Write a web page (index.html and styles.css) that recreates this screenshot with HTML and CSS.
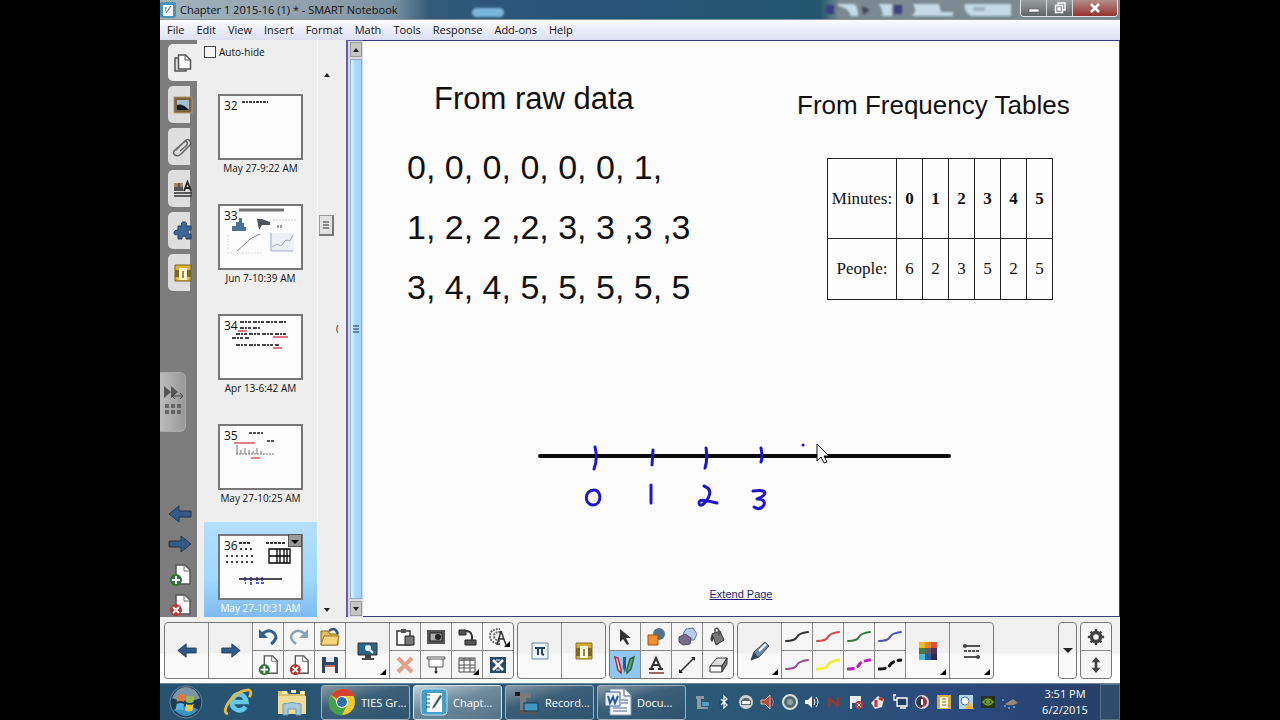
FILE: index.html
```html
<!DOCTYPE html>
<html lang="en">
<head>
  <meta charset="UTF-8">
  <title>Chapter 1 2015-16 (1) * - SMART Notebook</title>
  <link rel="stylesheet" href="styles.css">
</head>
<body>
<div class="screen">

  <!-- Title bar -->
  <header class="titlebar">
    <svg class="app-icon" viewBox="0 0 16 16" width="16" height="16"><rect width="16" height="16" rx="2" fill="#4a93b8"/><rect x="3" y="3" width="10" height="11" fill="#fff"/><path d="M6 11l5-7M5 6h2M5 8h1" stroke="#357" fill="none"/></svg>
    <span class="title">Chapter 1 2015-16 (1) * - SMART Notebook</span>
    <span class="cloud"></span>
    <svg class="backdrop" viewBox="0 0 200 19" width="200" height="19"><g fill="#c3dae6"><path d="M18 4h15q5 0 5 12h-7q-3-9-13-10z"/><path d="M58 4h14v12H62q2-6-4-12zM93 4h26l2 8h12v4H92q6-5 1-12z"/><path d="M145 4h46v12h-40q-8-5-6-12z"/></g><path d="M6 5h8v9H6zM74 5h8v9h-8z" fill="#3a3f7e"/><path d="M42 6l8 4-7 5z" fill="#3d4650"/><path d="M154 8h10v2h-10z" stroke="#7a8c98" fill="none"/></svg>
    <div class="window-buttons">
      <button aria-label="Minimize"><svg viewBox="0 0 12 12" width="12" height="12"><path d="M1 7h10v3H1z" fill="#fff" stroke="#444" stroke-width=".5"/></svg></button>
      <button aria-label="Restore"><svg viewBox="0 0 12 12" width="12" height="12"><path d="M4 3V1h7v7H9M1.500 3.500h7v7h-7zM4 6h2v2H4z" fill="none" stroke="#fff" stroke-width="1.500"/></svg></button>
      <button class="close" aria-label="Close"><svg viewBox="0 0 12 12" width="12" height="12"><path d="M2 2l8 8M10 2l-8 8" stroke="#fff" stroke-width="2.500"/></svg></button>
    </div>
  </header>

  <nav class="menubar">
    <a href="#">File</a><a href="#">Edit</a><a href="#">View</a><a href="#">Insert</a><a href="#">Format</a><a href="#">Math</a><a href="#">Tools</a><a href="#">Response</a><a href="#">Add-ons</a><a href="#">Help</a>
  </nav>

  <main class="workspace">
    <!-- Side tabs -->
    <aside class="rail">
      <div class="tabs">
        <button class="active" aria-label="Page Sorter"><svg viewBox="0 0 20 20" width="20" height="20"><path d="M5 5H2v13h11v-3" fill="#ddd" stroke="#555" stroke-width="1.500"/><path d="M5.500 2h7l5 5v9h-12z" fill="#fff" stroke="#555" stroke-width="1.500"/><path d="M12 2v5h5" fill="none" stroke="#555"/></svg></button>
        <button aria-label="Gallery"><svg viewBox="0 0 20 20" width="20" height="20"><path d="M1 2h18v16H1z" fill="#7a6342" stroke="#b59a6d"/><path d="M4 5h12v10H4z" fill="#a3bed0"/><path d="M4 10q5-2 12 5H4z" fill="#111c28"/></svg></button>
        <button aria-label="Attachments"><svg viewBox="0 0 20 20" width="20" height="20"><path d="M3 13L12 4q3-3 5 0t-1 5l-8 8q-3 3-6 1t0-5l8-7q3-3 4-1t-1 4l-6 5" fill="none" stroke="#666" stroke-width="1.600"/></svg></button>
        <button aria-label="Properties"><svg viewBox="0 0 20 20" width="20" height="20"><path d="M1 4h9v8H1z" fill="#a48568"/><path d="M1 8h9v4H1zM5 4h2v8H5z" fill="#555"/><path d="M11 12l3.500-9 3.500 9M12 9h5" stroke="#222" stroke-width="1.800" fill="none"/><path d="M1 14h18M1 17h18" stroke="#333" stroke-width="1.500"/></svg></button>
        <button aria-label="Add-ons"><svg viewBox="0 0 20 20" width="20" height="20"><path d="M5 5h4q-2-4 2-4t2 4h5v4q-3-1-3 2t3 2v5h-5q1-3-2-3t-2 3H5v-5q-4 2-4-1t4-3z" fill="#3d6796" stroke="#1f3d63"/></svg></button>
        <button aria-label="Activity"><svg viewBox="0 0 20 20" width="20" height="20"><path d="M2 2h16v16H2z" fill="#e1b33b" stroke="#7c601a"/><path d="M2 7h16v7H2z" fill="#806819"/><path d="M6 5h8v12H6z" fill="#fff8de"/><path d="M9 8h2v7H9z" fill="#a98a35"/></svg></button>
      </div>
      <button class="handle" aria-label="Move toolbar"><svg viewBox="0 0 24 46" width="24" height="46"><path d="M4 4v12l7-6zM11 4v12l7-6z" fill="#555"/><path d="M12 14h11M15 11l-3 3 3 3M20 11l3 3-3 3" stroke="#444" fill="none"/><path d="M5 22h4v4H5zM11 22h4v4h-4zM17 22h4v4h-4zM5 28h4v4H5zM11 28h4v4h-4zM17 28h4v4h-4z" fill="#666"/></svg></button>
      <div class="page-buttons">
        <button aria-label="Previous page"><svg viewBox="0 0 24 20" width="24" height="20"><use href="#arrow-left"/></svg></button>
        <button aria-label="Next page"><svg viewBox="0 0 24 20" width="24" height="20"><use href="#arrow-right"/></svg></button>
        <button aria-label="Add page"><svg viewBox="0 0 24 24" width="24" height="24"><use href="#page-add"/></svg></button>
        <button aria-label="Delete page"><svg viewBox="0 0 24 24" width="24" height="24"><use href="#page-delete"/></svg></button>
      </div>
    </aside>

    <!-- Page sorter -->
    <section class="sorter">
      <div class="pages">
        <label class="autohide"><input type="checkbox">Auto-hide</label>
        <figure class="page">
          <div class="thumb"><span class="num">32</span><svg viewBox="0 0 81 62"><path d="M22 6h26" stroke="#444" stroke-width="2" stroke-dasharray="3 1 2 1"/></svg></div>
          <figcaption>May 27-9:22 AM</figcaption>
        </figure>
        <figure class="page">
          <div class="thumb"><span class="num">33</span><svg viewBox="0 0 81 62"><path d="M19 4h45" stroke="#707070" stroke-width="3"/><path d="M12 25h14v-4h-2v-4h-2v-5h-3v4h-3v4h-4z" fill="#4d6f9c"/><path d="M37 13h5l8 3v3h-8l-3 5z" fill="#50545a"/><path d="M53 14h23" stroke="#ccc" stroke-dasharray="2 1"/><path d="M58 22v-3M61 22v-3" stroke="#444"/><path d="M7 47h35M8 29v15" stroke="#ddd" stroke-dasharray="2 1"/><path d="M17 45l9-8 4-4 10-5" stroke="#888" fill="none"/><path d="M50 27h24v18H50z" fill="#edf0f5"/><path d="M51 27v18h22M52 41l5-3 4 2 5-6 4 1 3-6" stroke="#8b9bb5" fill="none" stroke-width=".8"/></svg></div>
          <figcaption>Jun 7-10:39 AM</figcaption>
        </figure>
        <figure class="page">
          <div class="thumb"><span class="num">34</span><svg viewBox="0 0 81 62"><g stroke="#444" stroke-width="2" stroke-dasharray="4 1 2 1 3 2"><path d="M20 6h46M20 12h20M16 18h50M12 22h18M16 29h44"/></g><path d="M18 15h9M53 21h15M53 32h9" stroke="#d34b55" stroke-width="1.500"/></svg></div>
          <figcaption>Apr 13-6:42 AM</figcaption>
        </figure>
        <figure class="page">
          <div class="thumb"><span class="num">35</span><svg viewBox="0 0 81 62"><path d="M29 7h14M47 15h7" stroke="#555" stroke-width="2" stroke-dasharray="3 1"/><path d="M14 17h21M31 32h9" stroke="#dc8187" stroke-width="2"/><path d="M16 28h39" stroke="#777" stroke-dasharray="2 1"/><path d="M17 28V19M21 28v-4M25 28v-6M29 28v-4M33 28v-3M37 28v-6M41 28v-3" stroke="#777"/></svg></div>
          <figcaption>May 27-10:25 AM</figcaption>
        </figure>
        <figure class="page selected">
          <div class="thumb"><span class="num">36</span><button class="page-menu" aria-label="Page menu"></button><svg viewBox="0 0 81 62"><path d="M19 7h11M46 7h20" stroke="#333" stroke-width="2" stroke-dasharray="3 1"/><g stroke="#444" stroke-width="2" stroke-dasharray="2 3"><path d="M20 13h12M6 20h29M6 26h29"/></g><path d="M49 13h21v14H49zM49 20h21M57 13v14M60 13v14M64 13v14M67 13v14" stroke="#000" stroke-width="1.300" fill="#fff"/><path d="M19 43h43" stroke="#111" stroke-width="1.500"/><path d="M25 41v4M31 41v4M37 41v4M42 41v4M25 47h1M31 46v3M36 47h3M41 47h3" stroke="#22b" stroke-width="1.500"/></svg></div>
          <figcaption>May 27-10:31 AM</figcaption>
        </figure>
      </div>
      <div class="sorter-scroll">
        <span class="tri up"></span>
        <span class="knob"><svg viewBox="0 0 12 18" width="12" height="18"><path d="M3 6h6M3 9h6M3 12h6" stroke="#333"/></svg></span>
        <span class="tri down"></span>
      </div>
      <span class="collapse">(</span>
    </section>

    <div class="slide-scroll">
      <button aria-label="Scroll up"><span class="tri up"></span></button>
      <div class="track"><svg viewBox="0 0 8 10" width="8" height="10"><path d="M1 2h6M1 5h6M1 8h6" stroke="#235"/></svg></div>
      <button aria-label="Scroll down"><span class="tri down"></span></button>
    </div>

    <!-- Notebook page -->
    <article class="slide">
      <div class="examples">
        <section class="raw">
          <h2>From raw data</h2>
          <p>0, 0, 0, 0, 0, 0, 1,</p>
          <p>1, 2, 2 ,2, 3, 3 ,3 ,3</p>
          <p>3, 4, 4, 5, 5, 5, 5, 5</p>
        </section>
        <section class="frequency">
          <h2>From Frequency Tables</h2>
          <table>
            <tr class="minutes"><th scope="row">Minutes:</th><td>0</td><td>1</td><td>2</td><td>3</td><td>4</td><td>5</td></tr>
            <tr class="people"><th scope="row">People:</th><td>6</td><td>2</td><td>3</td><td>5</td><td>2</td><td>5</td></tr>
          </table>
        </section>
      </div>
      <!-- pen strokes on the number line -->
      <svg class="ink" viewBox="0 0 420 80" width="420" height="80">
        <path d="M6 16H415" stroke="#0a0a0a" stroke-width="4" stroke-linecap="round"/>
        <g fill="none" stroke="#1f14d2" stroke-width="3" stroke-linecap="round" stroke-linejoin="round">
          <path d="M61 7q3 12-1 22M119 10l-1 15M172 8q2 11-1 20M227 8q2 9 0 14"/>
          <path d="M60 50c-10 0-10 15-1 15s9-15 1-15z"/>
          <path d="M117 45v18"/>
          <path d="M170 46q8 3 5 10c-3 8-10 12-10 7s8-2 18 0"/>
          <path d="M219 51q15-2 11 4-3 3-7 4 9 0 7 6-4 6-10 2"/>
          <path d="M269 5h.1"/>
        </g>
        <path d="M283 4v17l4-4 3 6 3-1-3-6h5z" fill="#fff" stroke="#111"/>
      </svg>
      <a class="extend" href="#">Extend Page</a>
    </article>
  </main>

  <!-- Toolbar -->
  <section class="toolbar">
    <div class="group g-main">
      <button class="tall" aria-label="Back"><svg viewBox="0 0 24 20" width="20" height="17"><use href="#arrow-left"/></svg></button>
      <button class="tall" aria-label="Forward"><svg viewBox="0 0 24 20" width="20" height="17"><use href="#arrow-right"/></svg></button>
      <button aria-label="Undo"><svg viewBox="0 0 20 20" width="20" height="20"><path d="M4 7q7-6 12-1t-3 11" fill="none" stroke="#345f8a" stroke-width="3"/><path d="M1 2v9h9z" fill="#345f8a"/></svg></button>
      <button aria-label="Redo"><svg viewBox="0 0 20 20" width="20" height="20"><path d="M16 7q-7-6-12-1t3 11" fill="none" stroke="#8ca3b4" stroke-width="2.500"/><path d="M19 2v9h-9z" fill="#8ca3b4"/></svg></button>
      <button aria-label="Open"><svg viewBox="0 0 20 20" width="20" height="20"><path d="M1 4h7l2 3h8v11H1z" fill="#e5bd59" stroke="#896a24"/><path d="M1 18l3-9h15l-2 9z" fill="#f6d678" stroke="#967532"/><path d="M9 4q6-5 9 3" fill="none" stroke="#355879" stroke-width="2.500"/></svg></button>
      <button class="tall more" aria-label="View screens"><svg viewBox="0 0 22 20" width="22" height="20"><path d="M1 2h19v12H1z" fill="#2c6386" stroke="#333"/><path d="M8 14h6v3h3v2H5v-2h3z" fill="#444"/><circle cx="11" cy="7" r="3" fill="#e8f3fa"/><path d="M13 9l3 3" stroke="#e8f3fa" stroke-width="2"/></svg></button>
      <button aria-label="Paste"><svg viewBox="0 0 20 20" width="20" height="20"><path d="M2 4h13v14H2z" fill="#fff" stroke="#333" stroke-width="1.500"/><path d="M6 2h5v4H6z" fill="#555"/><path d="M10 9h9v9h-9z" fill="#777" stroke="#222"/></svg></button>
      <button aria-label="Capture"><svg viewBox="0 0 20 20" width="20" height="20"><path d="M1 3h18v14H1z" fill="#555"/><path d="M4 6h12v8H4z" fill="#aaa" stroke="#222"/><circle cx="12" cy="10" r="3" fill="#222"/></svg></button>
      <button aria-label="Document camera"><svg viewBox="0 0 20 20" width="20" height="20"><path d="M2 3h7v5H2zM8 13h11v5H8z" fill="#555" stroke="#222"/><path d="M9 4q7 0 6 9" fill="none" stroke="#333" stroke-width="2"/></svg></button>
      <button class="more" aria-label="Measurement tools"><svg viewBox="0 0 20 20" width="20" height="20"><path d="M12 17Q2 16 2 9t10-7M12 14Q6 13 6 9t6-4" fill="none" stroke="#666" stroke-width="2" stroke-dasharray="2 1"/><path d="M13 4l-4 14M13 4l5 14M10 12h6" fill="none" stroke="#333" stroke-width="1.500"/></svg></button>
      <button aria-label="Add page"><svg viewBox="0 0 24 24" width="22" height="22"><use href="#page-add"/></svg></button>
      <button aria-label="Delete page"><svg viewBox="0 0 24 24" width="22" height="22"><use href="#page-delete"/></svg></button>
      <button aria-label="Save"><svg viewBox="0 0 20 20" width="20" height="20"><path d="M2 2h15l1 1v15H2z" fill="#2c4868"/><path d="M6 2h8v5H6z" fill="#dfe7ee"/><path d="M5 10h10v8H5z" fill="#f8eaea"/><path d="M5 10h10v2H5z" fill="#c66"/></svg></button>
      <button aria-label="Delete"><svg viewBox="0 0 20 20" width="20" height="20"><path d="M3 3l14 14M17 3L3 17" stroke="#e59d8c" stroke-width="4"/></svg></button>
      <button aria-label="Screen shade"><svg viewBox="0 0 20 20" width="20" height="20"><path d="M1 2h18v2H1zM3 4v8h14V4" fill="#fff" stroke="#555"/><path d="M10 12v4" stroke="#333" stroke-width="1.500"/><circle cx="10" cy="17" r="1.500" fill="#333"/></svg></button>
      <button class="more" aria-label="Table"><svg viewBox="0 0 20 20" width="20" height="20"><path d="M2 3h16v14H2z" fill="#fff" stroke="#444"/><path d="M2 3h16v3H2z" fill="#888"/><path d="M2 10h16M2 13h16M7 3v14M13 3v14" stroke="#555"/></svg></button>
      <button aria-label="SMART Exchange"><svg viewBox="0 0 20 20" width="20" height="20"><path d="M2 2h16v16H2z" fill="#28486a"/><path d="M5 5l10 10M15 5L5 15" stroke="#fff" stroke-width="2.500"/><path d="M8 5h4M8 15h4" stroke="#fff"/></svg></button>
    </div>

    <div class="group g-addons">
      <button aria-label="Math"><svg viewBox="0 0 18 18" width="18" height="18"><path d="M1 1h16v16H1z" fill="#edf3f8" stroke="#6a88a5"/><path d="M4 6h10M7 6v7M11 6v6l2 1" stroke="#28486a" stroke-width="2" fill="none"/></svg></button>
      <button aria-label="Activity builder"><svg viewBox="0 0 18 18" width="18" height="18"><path d="M1 1h16v16H1z" fill="#d6a832" stroke="#86702c"/><path d="M1 6h16v8H1z" fill="#80661c"/><path d="M5 4h8v12H5z" fill="#fff9e4"/><path d="M8 7h2v7H8z" fill="#998247"/></svg></button>
    </div>

    <div class="group g-tools">
      <button aria-label="Select"><svg viewBox="0 0 20 20" width="20" height="20"><path d="M5 2v13l3-3 4 6 2-1-3-6h5z" fill="#333"/></svg></button>
      <button aria-label="Shapes"><svg viewBox="0 0 20 20" width="20" height="20"><circle cx="13" cy="7" r="6" fill="#4c7594"/><path d="M2 8h10v10H2z" fill="#ef902e" stroke="#a7510e"/></svg></button>
      <button aria-label="Regular polygons"><svg viewBox="0 0 20 20" width="20" height="20"><path d="M9 2l7-1 4 6-3 6H9L6 7z" fill="#b5cde7" stroke="#5d789b"/><path d="M2 10l6-3 6 4-1 6-7 1-4-3z" fill="#786c91" stroke="#4e4466"/></svg></button>
      <button aria-label="Fill"><svg viewBox="0 0 20 20" width="20" height="20"><path d="M4 7l8-3 4 9-8 5z" fill="#777" stroke="#333"/><path d="M7 6V2q3-2 4 2v5" fill="none" stroke="#555" stroke-width="1.500"/><path d="M4 7q-3 5 0 8 2-2 1-6z" fill="#444"/></svg></button>
      <button class="on" aria-label="Pens"><svg viewBox="0 0 22 20" width="22" height="20"><path d="M1 2l3 1 3 11v4l-3-3z" fill="#f4dada" stroke="#b12c35" stroke-width="1.500"/><path d="M9 2h3v11l-1 5-2-5z" fill="#275b8a"/><path d="M20 2l-4 2-3 10v4l4-4z" fill="#67a375" stroke="#276b35" stroke-width="1.500"/></svg></button>
      <button aria-label="Text"><svg viewBox="0 0 20 20" width="20" height="20"><path d="M5 14l5-11 5 11M7 10h6M3 14h5M12 14h5" fill="none" stroke="#333" stroke-width="2"/><path d="M3 18h15" stroke="#a36564" stroke-width="2"/></svg></button>
      <button aria-label="Lines"><svg viewBox="0 0 20 20" width="20" height="20"><path d="M3 17L17 3" stroke="#222" stroke-width="1.500"/><path d="M14 2h4v4zM2 14v4h4z" fill="#222"/></svg></button>
      <button aria-label="Eraser"><svg viewBox="0 0 20 20" width="20" height="20"><path d="M2 11l7-8h10l-5 8z" fill="#ddd" stroke="#444"/><path d="M2 11h12v6H2z" fill="#fff" stroke="#333"/><path d="M14 11l5-8v6l-5 8z" fill="#777" stroke="#333"/></svg></button>
    </div>

    <div class="group g-pens">
      <button class="tall more" aria-label="Pen type"><svg viewBox="0 0 22 22" width="22" height="22"><path d="M2 20l3-8L16 2l4 4L10 17z" fill="#718ba5" stroke="#345"/><path d="M10 11L17 4" stroke="#fff" stroke-width="2"/><path d="M2 20l3-8 4 5z" fill="#345"/></svg></button>
      <button aria-label="Black pen"><svg class="stroke black" viewBox="0 0 24 14"><use href="#stroke"/></svg></button>
      <button aria-label="Red pen"><svg class="stroke red" viewBox="0 0 24 14"><use href="#stroke"/></svg></button>
      <button aria-label="Green pen"><svg class="stroke green" viewBox="0 0 24 14"><use href="#stroke"/></svg></button>
      <button aria-label="Blue pen"><svg class="stroke blue" viewBox="0 0 24 14"><use href="#stroke"/></svg></button>
      <button class="tall more" aria-label="Color"><svg viewBox="0 0 18 18" width="18" height="18"><path d="M0 0h6v6H0z" fill="#f1b91e"/><path d="M6 0h6v6H6z" fill="#e98428"/><path d="M12 0h6v6h-6z" fill="#df4d44"/><path d="M0 6h6v6H0z" fill="#47773d"/><path d="M6 6h6v6H6z" fill="#5b5961"/><path d="M12 6h6v6h-6z" fill="#4b315b"/><path d="M0 12h6v6H0z" fill="#4ab6df"/><path d="M6 12h6v6H6z" fill="#285b90"/><path d="M12 12h6v6h-6z" fill="#322954"/></svg></button>
      <button class="tall more" aria-label="Line properties"><svg viewBox="0 0 18 18" width="18" height="18"><path d="M1 4h16M1 15h16" stroke="#555" stroke-width="2"/><path d="M1 9h16" stroke="#555" stroke-width="2" stroke-dasharray="3 1"/><circle cx="2" cy="4" r="2" fill="#444"/><circle cx="15" cy="15" r="2" fill="#444"/></svg></button>
      <button aria-label="Purple pen"><svg class="stroke purple" viewBox="0 0 24 14"><use href="#stroke"/></svg></button>
      <button aria-label="Yellow highlighter"><svg class="stroke yellow" viewBox="0 0 24 14"><use href="#stroke"/></svg></button>
      <button aria-label="Magenta dashed pen"><svg class="stroke magenta" viewBox="0 0 24 14"><use href="#stroke"/></svg></button>
      <button aria-label="Black dashed pen"><svg class="stroke dashed" viewBox="0 0 24 14"><use href="#stroke"/></svg></button>
    </div>

    <div class="group g-overflow"><button aria-label="More tools"><span class="tri down"></span></button></div>
    <div class="group g-settings">
      <button aria-label="Customize toolbar"><svg viewBox="0 0 20 20" width="18" height="18"><circle cx="10" cy="10" r="5" fill="none" stroke="#444" stroke-width="4"/><path d="M10 1v3M10 16v3M1 10h3M16 10h3M4 4l2 2M14 14l2 2M16 4l-2 2M4 16l2-2" stroke="#444" stroke-width="3"/></svg></button>
      <button aria-label="Move toolbar"><svg viewBox="0 0 20 20" width="18" height="18"><path d="M10 5v10" stroke="#444" stroke-width="3"/><path d="M10 1l5 6H5zM10 19l5-6H5z" fill="#444"/></svg></button>
    </div>
  </section>

  <!-- Taskbar -->
  <footer class="taskbar">
    <button class="pin orb" aria-label="Start"><svg viewBox="0 0 36 36" width="34" height="34"><circle cx="18" cy="18" r="17" fill="#1c3c58" stroke="#6d8ca0"/><path d="M3 14Q8 2 18 2t15 12q-13 6-30 0z" fill="#7894a5"/><path d="M5 26q13 14 26 0-12-7-26 0z" fill="#3594bd"/><path d="M9 11q4-3 8 0l-1 7q-5-2-8 0z" fill="#e37932"/><path d="M19 11q4 2 8 0l-1 7q-4 2-8 0z" fill="#9bb94d"/><path d="M8 20q4-2 8 0l-1 7q-4-2-8 0z" fill="#5eb2e4"/><path d="M18 20q4 2 8 0l-1 7q-4 2-8 0z" fill="#f1c846"/></svg></button>
    <button class="pin" aria-label="Internet Explorer"><svg viewBox="0 0 32 32" width="30" height="30"><path d="M24 21q-4 6-10 3t-4-10 8-6 7 8H10" fill="none" stroke="#65c7ee" stroke-width="5"/><path d="M5 29Q-1 26 7 15T27 3q5 2 1 8" fill="none" stroke="#e2ba42" stroke-width="3"/></svg></button>
    <button class="pin" aria-label="Windows Explorer"><svg viewBox="0 0 32 32" width="32" height="32"><path d="M2 5h9l2 3h16v19H2z" fill="#dac06d"/><path d="M2 10h28v18H2z" fill="#f1dc96"/><path d="M6 5h5v3H6zM15 4h5v3h-5zM24 5h5v3h-5z" fill="#fff3bc"/><path d="M7 29V18q9-3 18 0v11h-5v-6h-8v6z" fill="#a6c9d9" stroke="#6d9db4"/></svg></button>
    <button class="task"><svg viewBox="0 0 28 28" width="28" height="28"><circle cx="14" cy="14" r="13" fill="#f0c72e"/><path d="M14 14L3 7q5-7 13-6 8 0 11 7H14z" fill="#d5432f"/><path d="M3 7q-6 12 3 18 4 3 8 2l5-10-8 0z" fill="#47a04b"/><circle cx="14" cy="14" r="6" fill="#fff"/><circle cx="14" cy="14" r="5" fill="#2f6fac"/></svg><span>TIES Gr...</span></button>
    <button class="task current"><svg viewBox="0 0 28 28" width="28" height="28"><rect x="1" y="1" width="26" height="26" rx="4" fill="#479ec9" stroke="#b5e2f5"/><path d="M7 5h15v19H7z" fill="#fff"/><path d="M6 7h4M6 11h4M6 15h4M6 19h4" stroke="#345"/><path d="M20 7l-7 11-1 3 3-2 7-11z" fill="#345d77"/></svg><span>Chapt...</span></button>
    <button class="task"><svg viewBox="0 0 28 28" width="28" height="28"><path d="M3 5h16v5H3zM8 10h6v12H8z" fill="#777b7d"/><path d="M3 4h5v4H3z" fill="#171b1e"/><path d="M5 22h20v4H5z" fill="#54575a"/><path d="M12 15h14v8H12z" fill="#4197c1" stroke="#153b51"/></svg><span>Record...</span></button>
    <button class="task"><svg viewBox="0 0 28 28" width="28" height="28"><path d="M6 1h15l6 6v20H6z" fill="#f5f8fb" stroke="#8399ad"/><path d="M20 1v7h7M9 20h14M9 23h14M17 12h7M17 15h7" fill="none" stroke="#49658b"/><path d="M1 4h15v14H1z" fill="#e9f0fa" stroke="#3e6397"/><path d="M4 8l2 7 3-6 2 6 3-7" fill="none" stroke="#2859a0" stroke-width="2"/></svg><span>Docu...</span></button>

    <div class="tray">
      <svg viewBox="0 0 16 16"><path d="M2 2h8v3H7v8h7v2H3V5H2z" fill="#8c9aa2"/><path d="M8 8h7v4H8z" fill="#4c9cc6"/></svg>
      <svg viewBox="0 0 16 16"><ellipse cx="8" cy="8" rx="5" ry="7" fill="#164e85"/><path d="M5 5l6 6-3 3V2l3 3-6 6" stroke="#fff" fill="none" stroke-width="1.300"/></svg>
      <svg viewBox="0 0 16 16"><circle cx="8" cy="8" r="7" fill="#ccd1d3"/><path d="M3 7l3-3h4l3 3v4H3z" fill="#5e6568"/><path d="M4 7h8v3H4z" fill="#fff"/></svg>
      <svg viewBox="0 0 16 16"><path d="M1 6h4l5-5v14l-5-5H1z" fill="#b64b36" stroke="#e5b1a1"/><path d="M12 4q3 4 0 8" stroke="#c68" fill="none"/></svg>
      <svg viewBox="0 0 16 16"><circle cx="8" cy="8" r="7" fill="#536b70" stroke="#d4dbdd" stroke-width="2"/><circle cx="8" cy="8" r="3" fill="#8ca39b"/></svg>
      <svg viewBox="0 0 16 16"><path d="M1 6h3l4-4v12l-4-4H1z" fill="#fff"/><path d="M10 5q2 3 0 6M12 3q4 5 0 10" stroke="#fff" fill="none"/></svg>
      <svg viewBox="0 0 16 16"><path d="M3 13V3M12 13V3M3 5l9 6" stroke="#873c36" stroke-width="3" fill="none"/></svg>
      <svg viewBox="0 0 16 16"><path d="M3 2v13" stroke="#fff" stroke-width="2"/><path d="M4 2h9v7H4z" fill="#e8edf0"/><circle cx="11" cy="11" r="4" fill="#b9393b"/><path d="M9 9l4 4M13 9l-4 4" stroke="#fff"/></svg>
      <svg viewBox="0 0 16 16"><path d="M1 9l7-7 6 3-2 8-7 2z" fill="#e8e4df"/><path d="M6 6v7M9 4l4 2" stroke="#c2362f" stroke-width="3"/></svg>
      <svg viewBox="0 0 16 16"><path d="M5 4h10v8H5zM8 14h6M2 1v5h3M1 1h3" fill="#1d4362" stroke="#fff" stroke-width="1.300"/></svg>
      <svg viewBox="0 0 16 16"><circle cx="8" cy="8" r="6" fill="#9d3439" stroke="#d9d9de" stroke-width="2"/><path d="M8 2v12a6 6 0 0 1 0-12" fill="#323846"/><path d="M7 5h2v6H7z" fill="#fff"/></svg>
      <svg viewBox="0 0 16 16"><path d="M1 1h14v14H1z" fill="#d5ac42"/><path d="M4 3h8v11H4z" fill="#fff6d6"/><path d="M6 5h4M6 8h4M6 11h4" stroke="#76622e"/></svg>
      <svg viewBox="0 0 16 16"><path d="M1 1h14v14H1z" fill="#b4d7e8"/><circle cx="7" cy="7" r="4" fill="#fff" stroke="#497c9a"/><path d="M11 8l5 7H7z" fill="#eeb32d"/></svg>
      <svg viewBox="0 0 16 16"><path d="M1 2h14v12H1z" fill="#25351d"/><path d="M3 8q5-6 10 0-5 6-10 0z" fill="none" stroke="#76a52f" stroke-width="1.500"/><circle cx="8" cy="8" r="2" fill="#76a52f"/></svg>
      <svg viewBox="0 0 16 16"><path d="M3 10l8-5 5 4-5 2H5z" fill="#9a8677"/><path d="M0 6h2M2 12h2M6 14h2M11 13h2" stroke="#5aabd9" stroke-width="1.500"/></svg>
    </div>
    <div class="clock"><time>3:51 PM</time><span>6/2/2015</span></div>
    <button class="peek" aria-label="Show desktop"></button>
  </footer>
</div>

<!-- shared shapes -->
<svg class="defs">
  <symbol id="arrow-left" viewBox="0 0 24 20"><path d="M1 10l10-8v5h12v6H11v5z" fill="#315a86" stroke="#20354c"/></symbol>
  <symbol id="arrow-right" viewBox="0 0 24 20"><path d="M23 10L13 2v5H1v6h12v5z" fill="#315a86" stroke="#20354c"/></symbol>
  <symbol id="page" viewBox="0 0 24 24"><path d="M8 2h9l5 5v14H8z" fill="#fff" stroke="#555" stroke-width="1.500"/><path d="M16 2v6h6" fill="none" stroke="#666"/></symbol>
  <symbol id="page-add" viewBox="0 0 24 24"><use href="#page"/><circle cx="8" cy="17" r="6" fill="#32733b"/><path d="M4 17h8M8 13v8" stroke="#fff" stroke-width="2"/></symbol>
  <symbol id="page-delete" viewBox="0 0 24 24"><use href="#page"/><circle cx="8" cy="17" r="6" fill="#b63838"/><path d="M5 14l6 6M11 14l-6 6" stroke="#fff" stroke-width="2"/></symbol>
  <symbol id="stroke" viewBox="0 0 24 14"><path d="M1 11q9 0 11-4t11-5"/></symbol>
</svg>
</body>
</html>
```
FILE: styles.css
```css
* {
  box-sizing: border-box;
}
body {
  margin: 0;
  background: #000;
  font-family: "Open Sans", "Noto Sans", sans-serif;
  font-size: 11px;
  color: #111;
}
button {
  padding: 0;
  border: none;
  background: none;
  font: inherit;
  color: inherit;
}
svg {
  display: block;
  flex: none;
}
.defs {
  display: none;
}
.screen {
  width: 75%;
  height: 100vh;
  margin: 0 auto;
  display: flex;
  flex-direction: column;
  background: #f2f2f2;
  overflow: hidden;
}

/* Title bar */
.titlebar {
  flex: none;
  height: 20px;
  display: flex;
  align-items: center;
  background: linear-gradient(90deg, #a3b3be 0, #8c9da9 180px, #7690a2 235px, #315a78 270px, #27557a 400px, #22566e 660px, #7b8a92 680px);
  border-bottom: 1px solid #8d9499;
}
.title {
  flex: none;
  width: 296px;
  padding-left: 4px;
  line-height: 19px;
  white-space: nowrap;
}
.cloud {
  width: 32px;
  height: 9px;
  margin-top: 6px;
  border-radius: 6px;
  background: #79b6dc;
  filter: blur(1px);
}
.backdrop {
  margin-left: auto;
  filter: blur(1px);
}
.window-buttons {
  align-self: flex-start;
  display: flex;
  height: 17px;
  margin-right: 2px;
  border: 1px solid #dfe5e8;
  border-top: none;
  border-radius: 0 0 4px 4px;
  overflow: hidden;
}
.window-buttons button {
  width: 26px;
  display: flex;
  align-items: center;
  justify-content: center;
  background: linear-gradient(#9b9fa1, #5f6467);
  border-right: 1px solid #d4d8da;
}
.window-buttons .close {
  width: 44px;
  border: none;
  background: linear-gradient(#b58d89, #94322c);
}

.menubar {
  flex: none;
  height: 20px;
  display: flex;
  gap: 12px;
  padding-left: 7px;
  background: linear-gradient(#fbfcff, #dcdff4);
}
.menubar a {
  color: #111;
  line-height: 20px;
  text-decoration: none;
}

.workspace {
  flex: 1;
  min-height: 0;
  display: flex;
}

/* Side tabs */
.rail {
  flex: none;
  width: 37px;
  display: flex;
  flex-direction: column;
  background: #7d7d7d;
}
.tabs {
  display: flex;
  flex-direction: column;
  gap: 5px;
  padding: 4px 0 0 8px;
}
.tabs button {
  width: 22px;
  height: 37px;
  display: flex;
  align-items: center;
  padding-left: 5px;
  border-radius: 5px 0 0 5px;
  background: #dedede;
}
.tabs .active {
  width: 29px;
  background: #eee;
}
.handle {
  width: 26px;
  height: 60px;
  margin-top: 81px;
  padding-top: 6px;
  border: 1px solid #aaa;
  border-left: none;
  border-radius: 0 6px 6px 0;
  background: linear-gradient(90deg, #bbb, #999);
}
.page-buttons {
  margin-top: auto;
  display: flex;
  flex-direction: column;
  gap: 8px;
  padding: 0 0 2px 8px;
}
.page-buttons button {
  height: 22px;
}

/* Page sorter */
.sorter {
  position: relative;
  flex: none;
  width: 149px;
  display: flex;
  background: #eee;
}
.pages {
  width: 120px;
  padding-left: 7px;
  overflow: hidden;
}
.autohide {
  display: flex;
  align-items: center;
  gap: 3px;
  height: 24px;
  margin-bottom: 18px;
  font-size: 10px;
}
.autohide input {
  appearance: none;
  width: 12px;
  height: 12px;
  margin: 0;
  border: 1px solid #444;
  background: #f6f6f6;
}
.page {
  width: 113px;
  margin: 0 0 15px;
  padding: 12px 14px 0;
}
.page.selected {
  margin: 0;
  background: linear-gradient(#b5defd, #9fdaff 60%, #81baf0);
}
.thumb {
  position: relative;
  width: 85px;
  height: 66px;
  border: 2px solid #777;
  background: #fcfcfc;
}
.num {
  position: absolute;
  top: 2px;
  left: 4px;
  font-size: 12px;
  line-height: 16px;
}
.page figcaption {
  margin: 0 -14px;
  line-height: 17px;
  font-size: 10px;
  text-align: center;
  white-space: nowrap;
}
.selected figcaption {
  color: #fff;
}
.page-menu {
  position: absolute;
  top: -2px;
  right: -1px;
  width: 14px;
  height: 13px;
  background: #999;
  border: 1px solid #555;
}
.page-menu::after {
  content: "";
  display: block;
  margin: 3px auto 0;
  width: 0;
  border: 4px solid transparent;
  border-top-color: #000;
  border-bottom: none;
}
.sorter-scroll {
  width: 18px;
  display: flex;
  flex-direction: column;
  align-items: center;
  padding: 33px 0 5px;
  border-left: 1px solid #f8f8f8;
}
.tri {
  width: 0;
  height: 0;
  border: 3px solid transparent;
}
.tri.up {
  border-bottom: 4px solid #222;
  border-top: none;
}
.tri.down {
  border-top: 4px solid #222;
  border-bottom: none;
}
.knob {
  margin: 138px 0 auto;
  border: 1px solid #999;
  border-right: 2px solid #777;
  border-bottom: 2px solid #777;
  background: #e2e2e2;
}
.collapse {
  align-self: center;
  padding-left: 1px;
  font-size: 9px;
}

.slide-scroll {
  flex: none;
  width: 17px;
  display: flex;
  flex-direction: column;
  gap: 2px;
  padding: 1px 1px 1px 2px;
  border-left: 2px solid #635bb5;
  border-top: 1px solid #635bb5;
  background: #dcdce0;
}
.slide-scroll button {
  height: 15px;
  display: flex;
  align-items: center;
  justify-content: center;
  border: 1px solid #999;
  background: #c5c5c5;
}
.track {
  flex: 1;
  display: flex;
  align-items: center;
  justify-content: center;
  border: 1px solid #8aabc7;
  background: linear-gradient(90deg, #e5f5ff, #a3d7fc 45%, #a3d7fc);
}

/* Notebook page */
.slide {
  flex: 1;
  min-width: 0;
  display: flex;
  flex-direction: column;
  align-items: center;
  background: #fcfcfc;
  border: 1px solid #3b397e;
  border-left: none;
  font-family: "Liberation Sans", Arial, sans-serif;
}
.examples {
  align-self: stretch;
  display: grid;
  grid-template-columns: 390px 1fr;
  padding: 38px 0 0 44px;
}
.slide h2 {
  margin: 0;
  font-weight: normal;
}
.raw h2 {
  padding-left: 27px;
  font-size: 31px;
  line-height: 40px;
  margin-bottom: 18px;
}
.raw p {
  margin: 0;
  font-size: 34px;
  line-height: 60px;
}
.frequency h2 {
  margin: 7px 0 34px;
  font-size: 26px;
  line-height: 38px;
}
.frequency table {
  margin-left: 30px;
  border-collapse: collapse;
  font-family: "Liberation Serif", "Times New Roman", serif;
  font-size: 17px;
}
.frequency th, .frequency td {
  width: 26px;
  padding: 0;
  border: 1px solid #222;
  text-align: center;
}
.frequency th {
  width: 69px;
  font-weight: normal;
}
.minutes {
  height: 80px;
}
.minutes td {
  font-weight: bold;
}
.people {
  height: 61px;
}
.ink {
  margin: 123px 0 0 5px;
}
.extend {
  margin: auto 0 14px;
  line-height: 16px;
  color: #1f1f7a;
}

/* Toolbar */
.toolbar {
  flex: none;
  height: 66px;
  display: flex;
  gap: 3px;
  padding: 5px 8px 4px 4px;
  background: linear-gradient(#f0f0f0 55%, #fff 56%);
}
.group {
  display: grid;
  grid-template-rows: 1fr 1fr;
  gap: 1px;
  border: 1px solid #777;
  border-radius: 4px;
  background: #888;
  overflow: hidden;
}
.g-main {
  grid-template-columns: 43px 43px 30px 30px 30px 43px 30px 30px 30px 30px;
}
.g-addons {
  grid-template-columns: 43px 43px;
  grid-template-rows: 1fr;
}
.g-tools {
  grid-template-columns: repeat(4, 30px);
}
.g-pens {
  grid-template-columns: 43px 30px 30px 30px 30px 43px 43px;
}
.g-overflow {
  grid-template-columns: 17px;
  grid-template-rows: 1fr;
  margin-left: auto;
}
.g-settings {
  grid-template-columns: 30px;
}
.group button {
  position: relative;
  display: flex;
  align-items: center;
  justify-content: center;
  background: #f6f6f6;
}
.group .tall, .g-addons button, .g-overflow button {
  grid-row: span 2;
  background: linear-gradient(#f0f0f0 55%, #fafafa 56%);
}
.g-addons button, .g-overflow button {
  grid-row: auto;
}
.group .on {
  background: #8fc8f5;
}
.g-overflow .tri {
  border-width: 5px 5px 0;
}
.more::after {
  content: "";
  position: absolute;
  right: 3px;
  bottom: 3px;
  border: 3px solid #000;
  border-top-color: transparent;
  border-left-color: transparent;
}
.stroke {
  width: 24px;
  height: 14px;
  fill: none;
  stroke-width: 2;
  stroke-linecap: round;
}
.black { stroke: #333; }
.red { stroke: #d64c4c; }
.green { stroke: #3c7c44; }
.blue { stroke: #5450b8; }
.purple { stroke: #93508c; }
.yellow { stroke: #eeee48; stroke-width: 3; }
.magenta { stroke: #b722bd; stroke-width: 3; stroke-dasharray: 5 5; }
.dashed { stroke: #111; stroke-width: 3; stroke-dasharray: 6 5; }

/* Taskbar */
.taskbar {
  flex: none;
  height: 37px;
  display: flex;
  align-items: center;
  border-top: 1px solid #6f8798;
  background: linear-gradient(90deg, #275370, #2b5874 60%, #2b497c 85%, #263f66);
  color: #fff;
}
.pin {
  flex: none;
  width: 54px;
  display: flex;
  justify-content: center;
}
.orb {
  width: 51px;
}
.task {
  flex: none;
  width: 89px;
  height: 35px;
  display: flex;
  align-items: center;
  gap: 5px;
  margin-left: 2px;
  padding-left: 6px;
  border: 1px solid #9fb4c2;
  border-radius: 3px;
  background: linear-gradient(165deg, #8799a5, #3c6079 40%, #2d526d);
  white-space: nowrap;
}
.task + .task {
  margin-left: 3px;
}
.task.current {
  border-color: #d9e5ec;
  background: linear-gradient(165deg, #c5d2da, #6d899b 45%, #567489);
}
.tray {
  flex: 1;
  display: flex;
  justify-content: space-between;
  padding: 0 12px 0 8px;
}
.tray svg {
  width: 16px;
  height: 16px;
}
.clock {
  width: 70px;
  display: flex;
  flex-direction: column;
  text-align: center;
  line-height: 16px;
}
.peek {
  width: 20px;
  height: 36px;
  border: 1px solid #56728a;
  background: #2d4c6c;
}
```
